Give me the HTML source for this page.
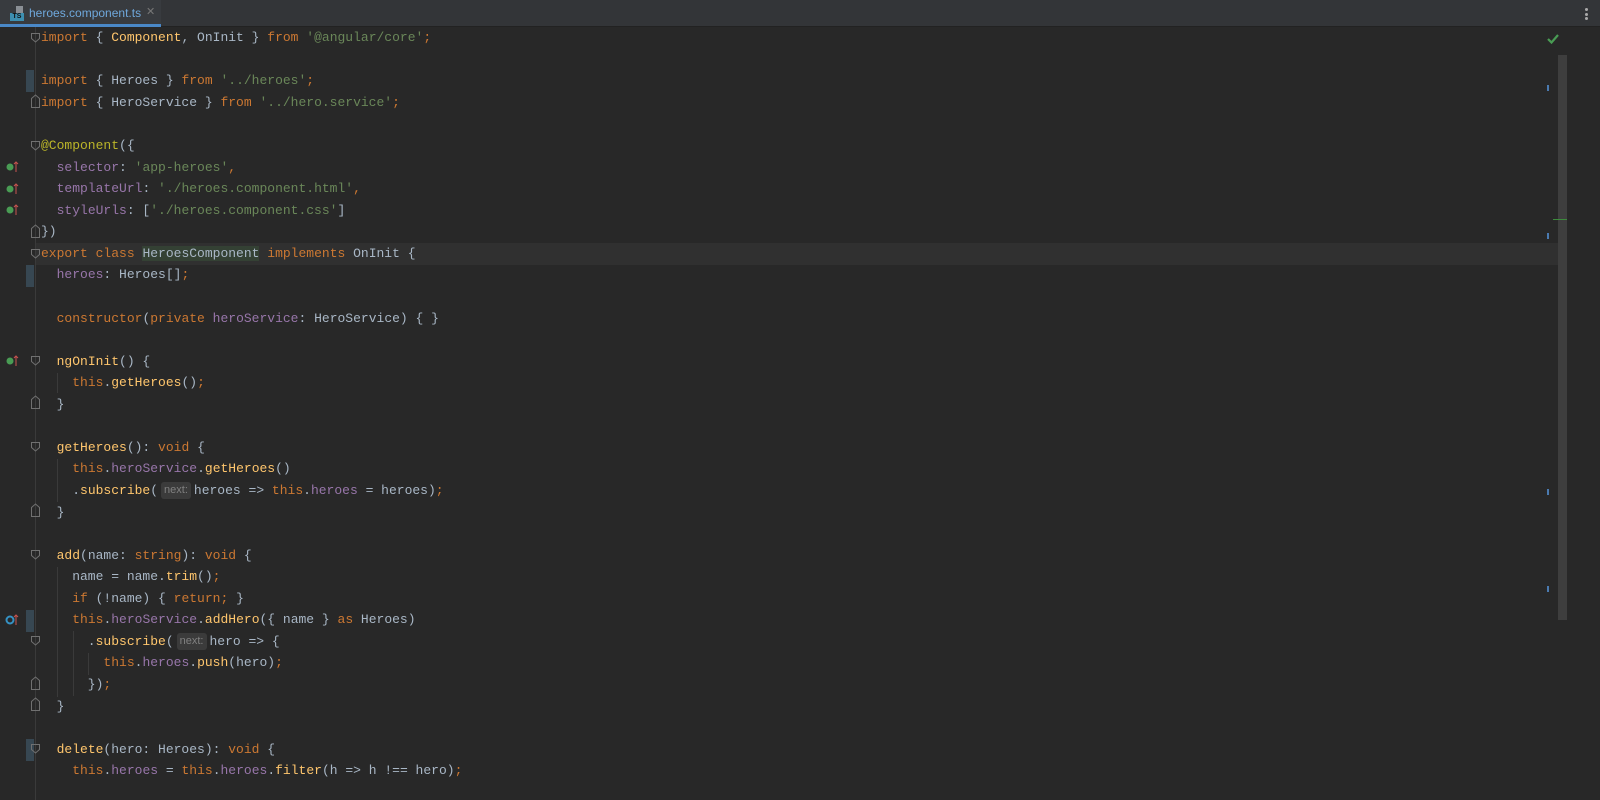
<!DOCTYPE html>
<html><head><meta charset="utf-8"><style>
*{margin:0;padding:0;box-sizing:border-box}
body{width:1600px;height:800px;background:#282828;overflow:hidden;position:relative;font-family:"Liberation Mono",monospace;font-size:13px;color:#a9b7c6}
.tabbar{position:absolute;left:0;top:0;width:1600px;height:27px;background:#333538;border-bottom:1px solid #222}
.tab{position:absolute;left:0;top:0;width:161px;height:27px;background:#383b3f;border-bottom:3px solid #4a88c7;font-family:"Liberation Sans",sans-serif;font-size:12px;color:#6fa8dc;padding:6px 0 0 29px}
.tab .x{position:absolute;left:146px;top:5px;color:#777;font-size:11px}
.ts{position:absolute;left:10px;top:13px;width:14px;height:8px;background:#3d8fb0;color:#111;font-size:7px;font-weight:bold;line-height:8px;text-align:center;font-family:"Liberation Sans",sans-serif}
.tsd{position:absolute;left:16px;top:6px;width:7px;height:7px;background:#8a8f95}
.dots{position:absolute;left:1585px;top:8px;width:3px}
.dots i{display:block;width:3px;height:3px;background:#aaa;border-radius:50%;margin-bottom:1.5px}
.gline{position:absolute;left:35px;top:27px;width:1px;height:773px;background:#3a3a3a}
.cur{position:absolute;left:36px;top:243px;width:1530px;height:22px;background:#303030}
.l{position:absolute;left:41px;height:21.56px;line-height:21.56px;white-space:pre}
.k{color:#cc7832}.s{color:#6a8759}.p{color:#9876aa}.f{color:#ffc66d}.y{color:#bbb529}
.hint{display:inline-block;background:#3b3b3b;color:#808080;font-family:"Liberation Sans",sans-serif;font-size:11px;border-radius:3px;padding:0 3px;line-height:17px;margin:0 3px 0 3px;vertical-align:1px}
.hl{background:#344134}
.chg{position:absolute;left:26px;width:8px;background:#374752}
.ind{position:absolute;width:1px;background:#3a3a3a}
.sb{position:absolute;left:1558px;top:55px;width:9px;height:565px;background:#3e3e3e}
.rm{position:absolute;left:1547px;width:2px;height:6px;background:#4a7ab0}
</style></head><body>
<div class="tabbar"></div>
<div class="tab"><div class="tsd"></div><div class="ts">TS</div>heroes.component.ts<span class="x">✕</span></div>
<div class="dots"><i></i><i></i><i></i></div>
<div class="cur"></div>
<div class="gline"></div>
<div class="chg" style="top:70px;height:22px"></div>
<div class="chg" style="top:265px;height:22px"></div>
<div class="chg" style="top:610px;height:22px"></div>
<div class="chg" style="top:739px;height:22px"></div>
<div class="ind" style="left:57px;top:373px;height:20px"></div>
<div class="ind" style="left:57px;top:459px;height:43px"></div>
<div class="ind" style="left:57px;top:567px;height:130px"></div>
<div class="ind" style="left:73px;top:631px;height:65px"></div>
<div class="ind" style="left:88px;top:653px;height:22px"></div>
<svg style="position:absolute;left:0;top:0" width="60" height="800">
<g fill="none" stroke="#707070" stroke-width="1">
<path d="M31.5 33.5h8v5l-4 3.5-4-3.5z"/>
<path d="M31.5 98.5l4-3.5 4 3.5v9h-8z"/>
<path d="M31.5 141.5h8v5l-4 3.5-4-3.5z"/>
<path d="M31.5 228.5l4-3.5 4 3.5v9h-8z"/>
<path d="M31.5 249.5h8v5l-4 3.5-4-3.5z"/>
<path d="M31.5 356.5h8v5l-4 3.5-4-3.5z"/>
<path d="M31.5 399.5l4-3.5 4 3.5v9h-8z"/>
<path d="M31.5 442.5h8v5l-4 3.5-4-3.5z"/>
<path d="M31.5 507.5l4-3.5 4 3.5v9h-8z"/>
<path d="M31.5 550.5h8v5l-4 3.5-4-3.5z"/>
<path d="M31.5 636.5h8v5l-4 3.5-4-3.5z"/>
<path d="M31.5 680.5l4-3.5 4 3.5v9h-8z"/>
<path d="M31.5 701.5l4-3.5 4 3.5v9h-8z"/>
<path d="M31.5 744.5h8v5l-4 3.5-4-3.5z"/>
</g>
<g>
<circle cx="10" cy="167" r="3.5" fill="#499c54"/><path d="M16 162v10M14 164l2-2 2 2" stroke="#c75450" fill="none"/>
<circle cx="10" cy="189" r="3.5" fill="#499c54"/><path d="M16 184v10M14 186l2-2 2 2" stroke="#c75450" fill="none"/>
<circle cx="10" cy="210" r="3.5" fill="#499c54"/><path d="M16 205v10M14 207l2-2 2 2" stroke="#c75450" fill="none"/>
<circle cx="10" cy="361" r="3.5" fill="#499c54"/><path d="M16 356v10M14 358l2-2 2 2" stroke="#c75450" fill="none"/>
<circle cx="10" cy="620" r="3.5" fill="none" stroke="#3592c4" stroke-width="2"/><path d="M16 615v10M14 617l2-2 2 2" stroke="#c75450" fill="none"/>
</g>
</svg>
<svg style="position:absolute;left:1546px;top:33px" width="14" height="12"><path d="M2 6l3.5 3.5L12 2" stroke="#499c54" stroke-width="2.2" fill="none"/></svg>
<div class="sb"></div>
<div class="rm" style="top:85px"></div>
<div class="rm" style="top:233px"></div>
<div class="rm" style="top:489px"></div>
<div class="rm" style="top:586px"></div>
<div style="position:absolute;left:1553px;top:219px;width:14px;height:1px;background:#3d8a3d"></div>

<div class="l" style="top:27.2px"><span class="k">import</span> { <span class="f">Component</span>, OnInit } <span class="k">from</span> <span class="s">'@angular/core'</span><span class="k">;</span></div>
<div class="l" style="top:70.3px"><span class="k">import</span> { Heroes } <span class="k">from</span> <span class="s">'../heroes'</span><span class="k">;</span></div>
<div class="l" style="top:91.9px"><span class="k">import</span> { HeroService } <span class="k">from</span> <span class="s">'../hero.service'</span><span class="k">;</span></div>
<div class="l" style="top:135px"><span class="y">@Component</span>({</div>
<div class="l" style="top:156.6px">  <span class="p">selector</span>: <span class="s">'app-heroes'</span><span class="k">,</span></div>
<div class="l" style="top:178.1px">  <span class="p">templateUrl</span>: <span class="s">'./heroes.component.html'</span><span class="k">,</span></div>
<div class="l" style="top:199.7px">  <span class="p">styleUrls</span>: [<span class="s">'./heroes.component.css'</span>]</div>
<div class="l" style="top:221.2px">})</div>
<div class="l" style="top:242.8px"><span class="k">export class</span> <span class="hl">HeroesComponent</span> <span class="k">implements</span> OnInit {</div>
<div class="l" style="top:264.4px">  <span class="p">heroes</span>: Heroes[]<span class="k">;</span></div>
<div class="l" style="top:307.5px">  <span class="k">constructor</span>(<span class="k">private</span> <span class="p">heroService</span>: HeroService) { }</div>
<div class="l" style="top:350.6px">  <span class="f">ngOnInit</span>() {</div>
<div class="l" style="top:372.2px">    <span class="k">this</span>.<span class="f">getHeroes</span>()<span class="k">;</span></div>
<div class="l" style="top:393.7px">  }</div>
<div class="l" style="top:436.8px">  <span class="f">getHeroes</span>(): <span class="k">void</span> {</div>
<div class="l" style="top:458.4px">    <span class="k">this</span>.<span class="p">heroService</span>.<span class="f">getHeroes</span>()</div>
<div class="l" style="top:480px">    .<span class="f">subscribe</span>(<span class="hint">next:</span>heroes =&gt; <span class="k">this</span>.<span class="p">heroes</span> = heroes)<span class="k">;</span></div>
<div class="l" style="top:501.5px">  }</div>
<div class="l" style="top:544.6px">  <span class="f">add</span>(name: <span class="k">string</span>): <span class="k">void</span> {</div>
<div class="l" style="top:566.2px">    name = name.<span class="f">trim</span>()<span class="k">;</span></div>
<div class="l" style="top:587.8px">    <span class="k">if</span> (!name) { <span class="k">return;</span> }</div>
<div class="l" style="top:609.3px">    <span class="k">this</span>.<span class="p">heroService</span>.<span class="f">addHero</span>({ name } <span class="k">as</span> Heroes)</div>
<div class="l" style="top:630.9px">      .<span class="f">subscribe</span>(<span class="hint">next:</span>hero =&gt; {</div>
<div class="l" style="top:652.4px">        <span class="k">this</span>.<span class="p">heroes</span>.<span class="f">push</span>(hero)<span class="k">;</span></div>
<div class="l" style="top:674px">      })<span class="k">;</span></div>
<div class="l" style="top:695.6px">  }</div>
<div class="l" style="top:738.7px">  <span class="f">delete</span>(hero: Heroes): <span class="k">void</span> {</div>
<div class="l" style="top:760.2px">    <span class="k">this</span>.<span class="p">heroes</span> = <span class="k">this</span>.<span class="p">heroes</span>.<span class="f">filter</span>(h =&gt; h !== hero)<span class="k">;</span></div>
</body></html>
